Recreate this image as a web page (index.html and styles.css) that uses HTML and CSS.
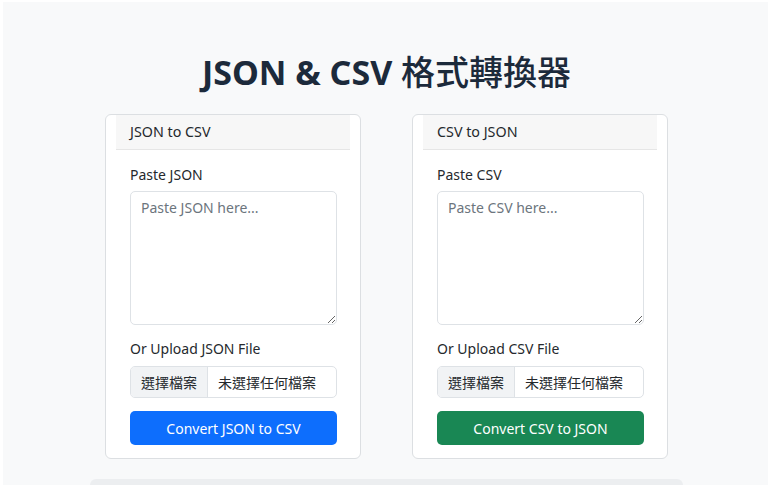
FILE: index.html
```html
<!DOCTYPE html>
<html lang="zh-Hant">
<head>
<meta charset="utf-8">
<title>JSON &amp; CSV 格式轉換器</title>
<link rel="stylesheet" href="styles.css">
</head>
<body>
<div class="page">
  <h1 class="title"><span class="title-latin">JSON &amp; CSV</span> <span class="title-cjk">格式轉換器</span></h1>
  <div class="cards">
    <section class="card">
      <div class="card-header">JSON to CSV</div>
      <div class="card-body">
        <label class="label">Paste JSON</label>
        <textarea class="textarea" placeholder="Paste JSON here..."></textarea>
        <label class="label label-upload">Or Upload JSON File</label>
        <div class="file">
          <span class="file-btn">選擇檔案</span>
          <span class="file-name">未選擇任何檔案</span>
        </div>
        <button class="btn btn-blue">Convert JSON to CSV</button>
      </div>
    </section>
    <section class="card">
      <div class="card-header">CSV to JSON</div>
      <div class="card-body">
        <label class="label">Paste CSV</label>
        <textarea class="textarea" placeholder="Paste CSV here..."></textarea>
        <label class="label label-upload">Or Upload CSV File</label>
        <div class="file">
          <span class="file-btn">選擇檔案</span>
          <span class="file-name">未選擇任何檔案</span>
        </div>
        <button class="btn btn-green">Convert CSV to JSON</button>
      </div>
    </section>
  </div>
  <div class="result"></div>
</div>
</body>
</html>
```
FILE: styles.css
```css
html {
  background: #ffffff;
}
body {
  margin: 0;
  font-family: "Noto Sans", "Noto Sans CJK TC", sans-serif;
  color: #25292d;
}
.page {
  margin: 2px 0 0 3px;
  padding-left: 2px;
  height: 483px;
  background: #f8f9fa;
  overflow: hidden;
  display: flex;
  flex-direction: column;
  align-items: center;
}
.title {
  margin: 42px 0 0 0;
  height: 54px;
  line-height: 54px;
  font-size: 34px;
  font-weight: 700;
  color: #1c2a3b;
  white-space: nowrap;
}
.title-cjk {
  font-family: "Noto Sans CJK TC", sans-serif;
  font-weight: 500;
}
.cards {
  margin-top: 16px;
  display: flex;
  gap: 51px;
}
.card {
  width: 234px;
  padding: 0 10px;
  height: 343px;
  background: #fff;
  border: 1px solid #dcdfe2;
  border-radius: 6px;
}
.card-header {
  height: 34px;
  line-height: 34px;
  padding-left: 14px;
  font-size: 14.3px;
  background: #f7f7f7;
  border-bottom: 1px solid #e6e6e6;
}
.card-body {
  padding: 13px 13px 0 14px;
  display: flex;
  flex-direction: column;
}
.label {
  font-size: 14px;
  line-height: 24px;
  height: 24px;
}
.textarea {
  margin-top: 4px;
  height: 134px;
  box-sizing: border-box;
  border: 1px solid #dee2e6;
  border-radius: 5px;
  padding: 6px 10px;
  font-family: "Noto Sans", sans-serif;
  font-size: 14px;
  resize: vertical;
  outline: none;
}
.textarea::placeholder {
  color: #6c757d;
}
.label-upload {
  margin-top: 12px;
}
.file {
  margin-top: 5px;
  height: 32px;
  box-sizing: border-box;
  border: 1px solid #dee2e6;
  border-radius: 5px;
  display: flex;
  overflow: hidden;
  font-family: "Noto Sans CJK TC", sans-serif;
  font-size: 14px;
  line-height: 30px;
}
.file-btn {
  width: 76px;
  text-align: center;
  background: #f1f3f5;
  border-right: 1px solid #dee2e6;
  color: #25292d;
}
.file-name {
  padding-left: 10px;
  color: #25292d;
}
.btn {
  margin-top: 13px;
  height: 34px;
  border: none;
  border-radius: 5px;
  color: #fff;
  font-family: "Noto Sans", sans-serif;
  font-size: 14px;
}
.btn-blue {
  background: #0d6efd;
}
.btn-green {
  background: #198754;
}
.result {
  margin-top: 20px;
  width: 593px;
  height: 20px;
  background: #eceef0;
  border-radius: 8px 8px 0 0;
}
```
